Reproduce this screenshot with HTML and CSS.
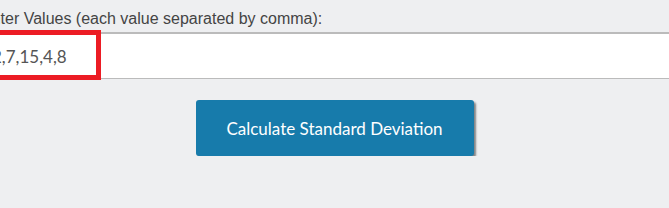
FILE: index.html
```html
<!DOCTYPE html>
<html lang="en">
<head>
	<meta charset="UTF-8">
	<title>Standard Deviation Calculator</title>
	<link rel="stylesheet" href="styles.css">
</head>
<body>
	<div class="calculator">
		<div class="field">
			<label class="fieldLabel" for="values">Enter Values (each value separated by comma):</label>
			<div class="inputWrap">
				<input class="valueInput" id="values" type="text" value="2,7,15,4,8">
				<div class="highlight"></div>
			</div>
		</div>
		<div class="actions">
			<button class="calcButton" type="button">Calculate Standard Deviation</button>
		</div>
	</div>
</body>
</html>
```

FILE: styles.css
```css
*{
	margin: 0;
	padding: 0;
	box-sizing: border-box;
}
body{
	background-color: #eeeff1;
	overflow: hidden;
}
.calculator{
	padding-top: 10px;
}
.field{
	margin-left: -19px;
}
.fieldLabel{
	display: block;
	height: 22px;
	font-family: "Liberation Sans", Arial, sans-serif;
	font-size: 16px;
	line-height: 18px;
	color: #444;
}
.inputWrap{
	position: relative;
}
.valueInput{
	display: block;
	width: calc(100% + 19px);
	height: 47px;
	padding-left: 11px;
	border: 1px solid #bbb;
	border-width: 2px 0 1px 0;
	background-color: #fff;
	font-family: Lato, "Liberation Sans", sans-serif;
	font-size: 17px;
	color: #555;
	outline: none;
}
.highlight{
	position: absolute;
	left: -10px;
	top: -2px;
	width: 130px;
	height: 50px;
	border: 5px solid #ec1c24;
	pointer-events: none;
}
.actions{
	display: flex;
	justify-content: center;
	padding-top: 21px;
}
.calcButton{
	width: 278px;
	height: 56px;
	border: none;
	border-radius: 3px;
	background-color: #177bab;
	box-shadow: 2px 2px 2px rgba(0,0,0,0.45);
	font-family: Lato, "Liberation Sans", sans-serif;
	font-size: 17px;
	color: #fff;
	cursor: pointer;
}
```
